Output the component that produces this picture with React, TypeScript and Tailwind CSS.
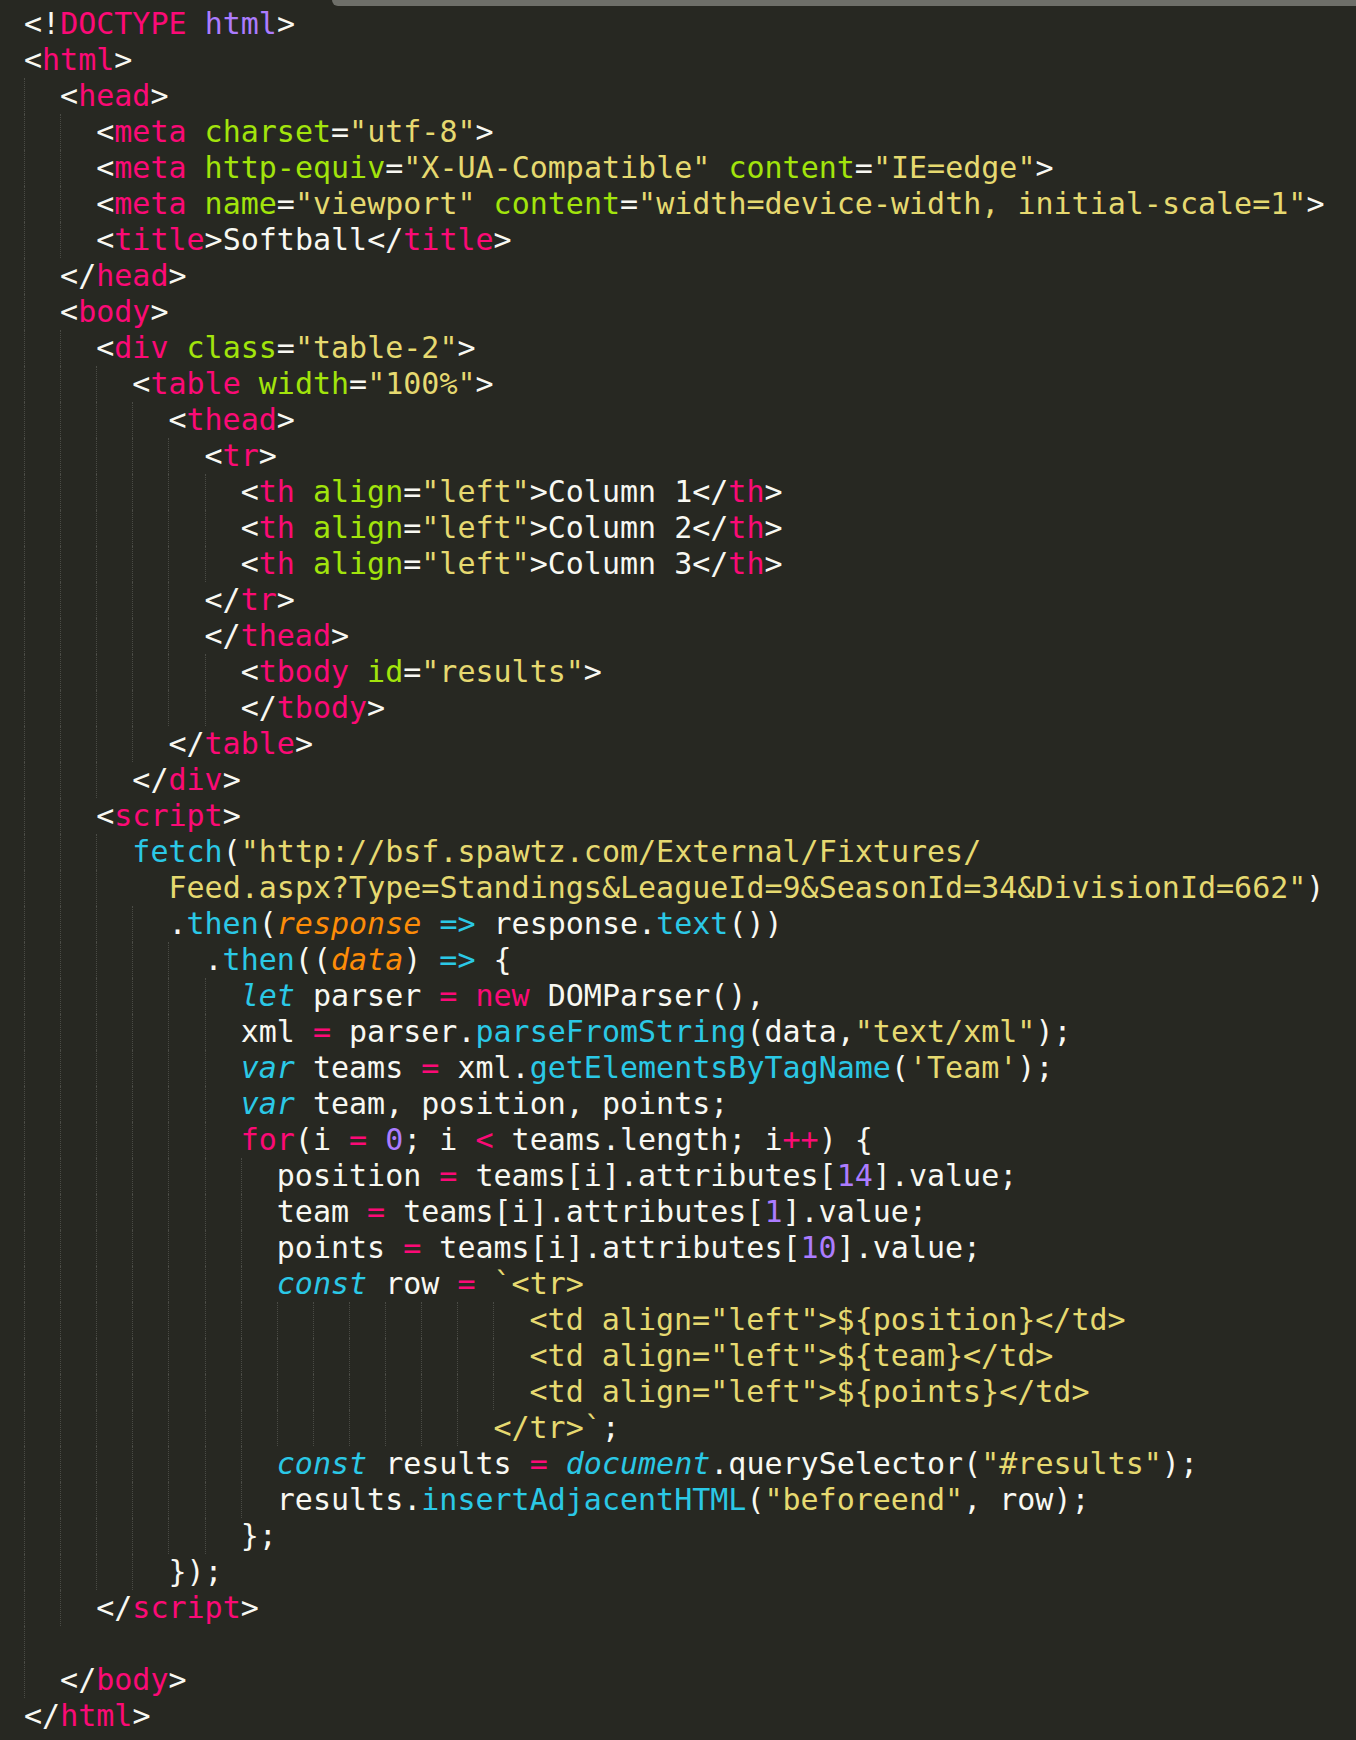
import React from "react";

type K = "w" | "p" | "g" | "y" | "u" | "c" | "ci" | "o";
type Tok = [K, string];
type Line = { indent: number; guides: number; toks: Tok[] };

const CLS: Record<K, string> = {
  w: "text-[#f8f8f2]",
  p: "text-[#fb0a76]",
  g: "text-[#a2e40c]",
  y: "text-[#e6d970]",
  u: "text-[#ac7cff]",
  c: "text-[#2bc8e6]",
  ci: "text-[#2bc8e6] italic",
  o: "text-[#fd8c08] italic",
};

const open = (name: string, attrs: [string, string][] = []): Tok[] => {
  const t: Tok[] = [["w", "<"], ["p", name]];
  attrs.forEach(([a, v]) => {
    t.push(["w", " "], ["g", a], ["w", "="], ["y", `"${v}"`]);
  });
  t.push(["w", ">"]);
  return t;
};
const close = (name: string): Tok[] => [["w", "</"], ["p", name], ["w", ">"]];

const L = (indent: number, guides: number, toks: Tok[]): Line => ({ indent, guides, toks });

const lines: Line[] = [
  L(0, 0, [["w", "<!"], ["p", "DOCTYPE"], ["w", " "], ["u", "html"], ["w", ">"]]),
  L(0, 0, open("html")),
  L(2, 1, open("head")),
  L(4, 2, open("meta", [["charset", "utf-8"]])),
  L(4, 2, open("meta", [["http-equiv", "X-UA-Compatible"], ["content", "IE=edge"]])),
  L(4, 2, open("meta", [["name", "viewport"], ["content", "width=device-width, initial-scale=1"]])),
  L(4, 2, [...open("title"), ["w", "Softball"], ...close("title")]),
  L(2, 1, close("head")),
  L(2, 1, open("body")),
  L(4, 2, open("div", [["class", "table-2"]])),
  L(6, 3, open("table", [["width", "100%"]])),
  L(8, 4, open("thead")),
  L(10, 5, open("tr")),
  L(12, 6, [...open("th", [["align", "left"]]), ["w", "Column 1"], ...close("th")]),
  L(12, 6, [...open("th", [["align", "left"]]), ["w", "Column 2"], ...close("th")]),
  L(12, 6, [...open("th", [["align", "left"]]), ["w", "Column 3"], ...close("th")]),
  L(10, 5, close("tr")),
  L(10, 5, close("thead")),
  L(12, 6, open("tbody", [["id", "results"]])),
  L(12, 6, close("tbody")),
  L(8, 4, close("table")),
  L(6, 3, close("div")),
  L(4, 2, open("script")),
  L(6, 3, [["c", "fetch"], ["w", "("], ["y", "\"http://bsf.spawtz.com/External/Fixtures/"]]),
  L(8, 3, [["y", "Feed.aspx?Type=Standings&LeagueId=9&SeasonId=34&DivisionId=662\""], ["w", ")"]]),
  L(8, 4, [["w", "."], ["c", "then"], ["w", "("], ["o", "response"], ["w", " "], ["c", "=>"], ["w", " response."], ["c", "text"], ["w", "())"]]),
  L(10, 5, [["w", "."], ["c", "then"], ["w", "(("], ["o", "data"], ["w", ") "], ["c", "=>"], ["w", " {"]]),
  L(12, 6, [["ci", "let"], ["w", " parser "], ["p", "="], ["w", " "], ["p", "new"], ["w", " DOMParser(),"]]),
  L(12, 6, [["w", "xml "], ["p", "="], ["w", " parser."], ["c", "parseFromString"], ["w", "(data,"], ["y", "\"text/xml\""], ["w", ");"]]),
  L(12, 6, [["ci", "var"], ["w", " teams "], ["p", "="], ["w", " xml."], ["c", "getElementsByTagName"], ["w", "("], ["y", "'Team'"], ["w", ");"]]),
  L(12, 6, [["ci", "var"], ["w", " team, position, points;"]]),
  L(12, 6, [["p", "for"], ["w", "(i "], ["p", "="], ["w", " "], ["u", "0"], ["w", "; i "], ["p", "<"], ["w", " teams.length; i"], ["p", "++"], ["w", ") {"]]),
  L(14, 7, [["w", "position "], ["p", "="], ["w", " teams[i].attributes["], ["u", "14"], ["w", "].value;"]]),
  L(14, 7, [["w", "team "], ["p", "="], ["w", " teams[i].attributes["], ["u", "1"], ["w", "].value;"]]),
  L(14, 7, [["w", "points "], ["p", "="], ["w", " teams[i].attributes["], ["u", "10"], ["w", "].value;"]]),
  L(14, 7, [["ci", "const"], ["w", " row "], ["p", "="], ["w", " "], ["y", "`<tr>"]]),
  L(28, 14, [["y", "<td align=\"left\">${position}</td>"]]),
  L(28, 14, [["y", "<td align=\"left\">${team}</td>"]]),
  L(28, 14, [["y", "<td align=\"left\">${points}</td>"]]),
  L(26, 13, [["y", "</tr>`"], ["w", ";"]]),
  L(14, 7, [["ci", "const"], ["w", " results "], ["p", "="], ["w", " "], ["ci", "document"], ["w", ".querySelector("], ["y", "\"#results\""], ["w", ");"]]),
  L(14, 7, [["w", "results."], ["c", "insertAdjacentHTML"], ["w", "("], ["y", "\"beforeend\""], ["w", ", row);"]]),
  L(12, 6, [["w", "};"]]),
  L(8, 4, [["w", "});"]]),
  L(4, 2, close("script")),
  L(2, 1, []),
  L(2, 1, close("body")),
  L(0, 0, close("html")),
];

function CodeLine({ line }: { line: Line }) {
  const extra = line.indent - line.guides * 2;
  return (
    <div className="flex h-[36px] items-center whitespace-pre">
      {Array.from({ length: line.guides }).map((_, i) => (
        <span key={i} className="block h-full w-[2ch] shrink-0 border-l border-dotted border-[#4a4b45]" />
      ))}
      {extra > 0 && <span>{" ".repeat(extra)}</span>}
      {line.toks.map(([k, s], i) => (
        <span key={i} className={CLS[k]}>
          {s}
        </span>
      ))}
    </div>
  );
}

export default function App() {
  return (
    <div className="relative min-h-[1740px] w-[1356px] overflow-hidden bg-[#272822]">
      <div className="absolute left-[332px] right-0 top-0 h-[6px] rounded-bl-[6px] bg-[#6e6f69]" />
      <div
        className="pl-[24px] pt-[6px] text-[30px] leading-[36px] text-[#f8f8f2]"
        style={{ fontFamily: '"DejaVu Sans Mono", "Liberation Mono", monospace' }}
      >
        {lines.map((l, i) => (
          <CodeLine key={i} line={l} />
        ))}
      </div>
    </div>
  );
}
